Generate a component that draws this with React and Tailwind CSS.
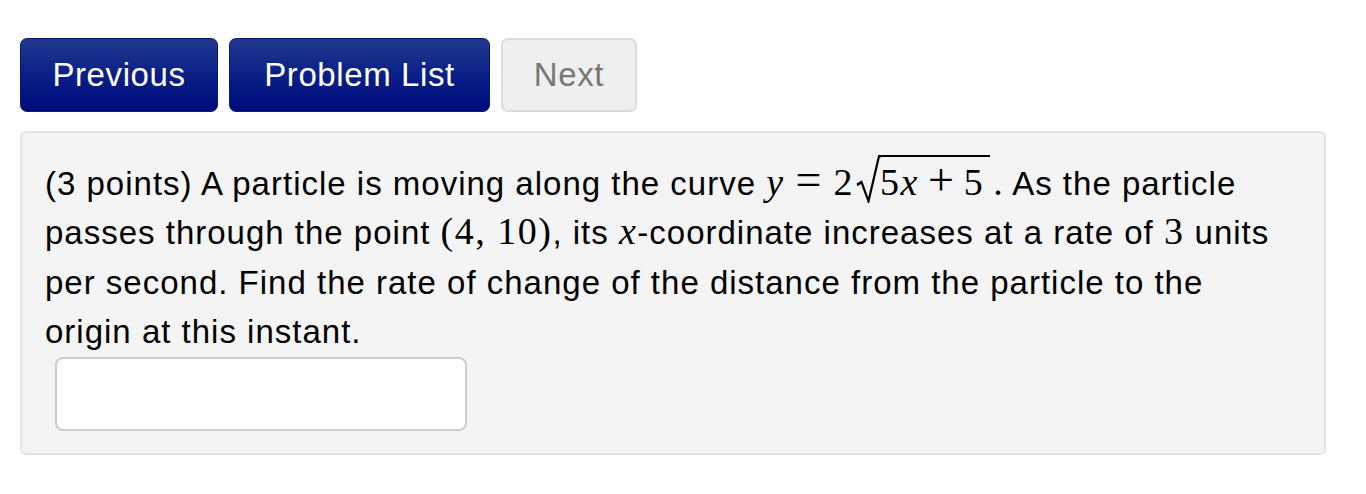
const MATH = { fontFamily: '"Liberation Serif", "Times New Roman", serif' };

function M({ children, italic = false, className = "" }) {
  return (
    <span
      className={`leading-none ${italic ? "italic" : ""} ${className || "text-[38px] tracking-[1.5px]"}`}
      style={MATH}
    >
      {children}
    </span>
  );
}

function Op({ children, space }) {
  return (
    <span className={`text-[46px] leading-none ${space}`} style={MATH}>
      {children}
    </span>
  );
}

function Sqrt({ children }) {
  return (
    <span className="relative inline-block pl-[24px] ml-[2px] leading-none">
      <svg
        className="absolute left-0 top-0 h-full w-[25px]"
        viewBox="0 0 25 40"
        preserveAspectRatio="none"
      >
        <path d="M1 25 L5.5 22.5 L12.5 38.5 L23 1 L25 1" fill="none" stroke="black" strokeWidth="2.2" />
      </svg>
      <span className="inline-block border-t-2 border-black leading-[38px] pr-[6px]">{children}</span>
    </span>
  );
}

function NavButton({ children, width, disabled = false }) {
  const base = "h-[74px] rounded-[7px] text-[33px] tracking-[0.6px]";
  if (disabled) {
    return (
      <button className={`${base} ${width} bg-[#efefef] text-[#777777] border-2 border-[#dcdcdc]`}>
        {children}
      </button>
    );
  }
  return (
    <button
      className={`${base} ${width} bg-gradient-to-b from-[#22398f] via-[#0a1e86] to-[#000b7c] text-white border border-[#0b1a6c]`}
    >
      {children}
    </button>
  );
}

export default function App() {
  return (
    <div
      className="w-[1366px] h-[494px] bg-white text-black pt-[38px] pl-[20px] pr-[40px]"
      style={{ fontFamily: '"Liberation Sans", Arial, sans-serif' }}
    >
      <div className="flex gap-[11px]">
        <NavButton width="w-[198px]">Previous</NavButton>
        <NavButton width="w-[261px]">Problem List</NavButton>
        <NavButton width="w-[136px]" disabled>
          Next
        </NavButton>
      </div>
      <div className="mt-[19px] h-[324px] bg-[#f4f4f4] border-2 border-[#e3e3e3] rounded-[6px] pt-[22px] pl-[23px] pr-[34px]">
        <p className="text-[33px] tracking-[1px] leading-[49.4px]">
          (3 points) A particle is moving along the curve <M italic>y</M>
          <Op space="mx-[11px]">=</Op>
          <M>2</M>
          <Sqrt>
            <M>5</M>
            <M italic>x</M>
            <Op space="mx-[9px]">+</Op>
            <M>5</M>
          </Sqrt>
          <M className="text-[38px] ml-[3px]">.</M> As the particle passes through the point{" "}
          <M>(4, 10)</M>, its <M italic>x</M>
          -coordinate increases at a rate of <M>3</M> units per second. Find the rate of change of
          the distance from the particle to the origin at this instant.
        </p>
        <input
          type="text"
          className="block ml-[10px] w-[412px] h-[74px] bg-white border-2 border-[#cccccc] rounded-[8px]"
        />
      </div>
    </div>
  );
}
